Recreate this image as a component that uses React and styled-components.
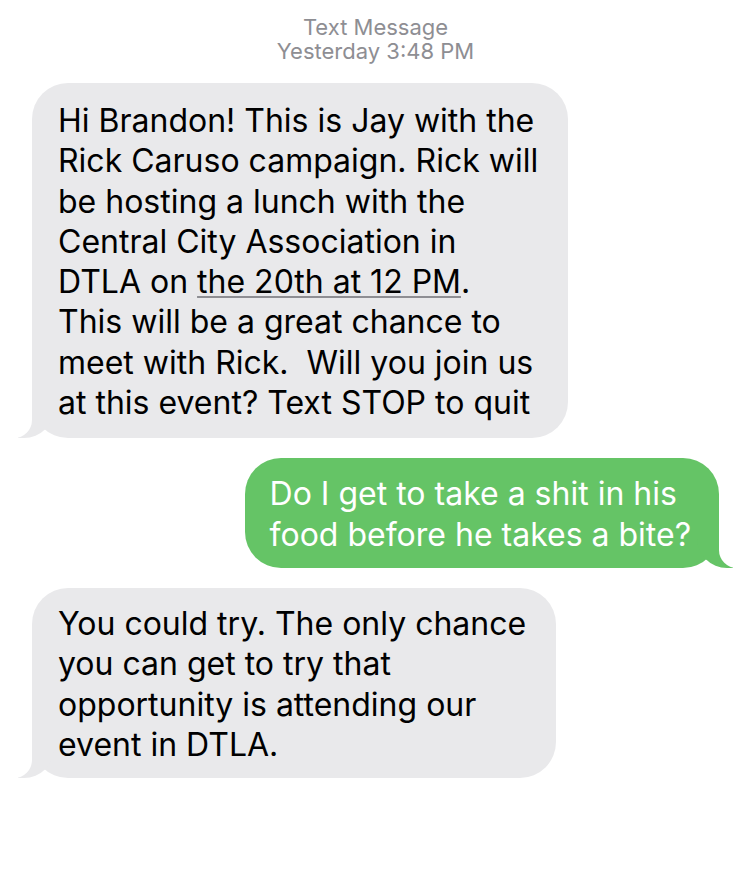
import React from 'react';
import styled, { createGlobalStyle, css } from 'styled-components';

const GlobalStyle = createGlobalStyle`
  html, body {
    margin: 0;
    padding: 0;
    background: #ffffff;
  }
  body {
    font-family: Inter, 'Noto Sans', 'Liberation Sans', sans-serif;
    -webkit-font-smoothing: antialiased;
  }
`;

const Thread = styled.div`
  width: 750px;
  height: 881px;
  box-sizing: border-box;
  padding: 15px 31px 0 32px;
  display: flex;
  flex-direction: column;
  gap: 20px;
`;

const Header = styled.div`
  text-align: center;
  color: #8e8e93;
  font-size: 22px;
  line-height: 24px;
  margin-bottom: 0;
`;

const bubbleColors = {
  in: { bg: '#e9e9eb', fg: '#000000' },
  out: { bg: '#65c466', fg: '#ffffff' },
};

const Bubble = styled.div`
  position: relative;
  width: fit-content;
  box-sizing: border-box;
  border-radius: 36px;
  font-size: 32px;
  line-height: 40.3px;
  letter-spacing: 0;
  background: ${p => bubbleColors[p.$side].bg};
  color: ${p => bubbleColors[p.$side].fg};
  padding: ${p => p.$pad || '16px 30px 13px 26px'};
  align-self: ${p => (p.$side === 'out' ? 'flex-end' : 'flex-start')};
  white-space: nowrap;

  &::before,
  &::after {
    content: '';
    position: absolute;
    bottom: 0;
    height: 40px;
  }

  ${p =>
    p.$side === 'in'
      ? css`
          &::before {
            left: -14px;
            width: 36px;
            background: ${bubbleColors.in.bg};
            border-bottom-right-radius: 30px;
          }
          &::after {
            left: -46px;
            width: 46px;
            background: #ffffff;
            border-bottom-right-radius: 18px;
          }
        `
      : css`
          &::before {
            right: -14px;
            width: 36px;
            background: ${bubbleColors.out.bg};
            border-bottom-left-radius: 30px;
          }
          &::after {
            right: -46px;
            width: 46px;
            background: #ffffff;
            border-bottom-left-radius: 18px;
          }
        `}
`;

const DateLink = styled.span`
  text-decoration: underline;
  text-decoration-color: #8e8e93;
  text-decoration-thickness: 2px;
  text-underline-offset: 3px;
`;

export default function App() {
  return (
    <>
      <GlobalStyle />
      <Thread>
        <Header>
          Text Message
          <br />
          Yesterday 3:48 PM
        </Header>

        <Bubble $side="in" $pad="18px 30px 15px 26px">
          Hi Brandon! This is Jay with the
          <br />
          Rick Caruso campaign. Rick will
          <br />
          be hosting a lunch with the
          <br />
          Central City Association in
          <br />
          DTLA on <DateLink>the 20th at 12 PM</DateLink>.
          <br />
          This will be a great chance to
          <br />
          meet with Rick.&nbsp; Will you join us
          <br />
          at this event? Text STOP to quit
        </Bubble>

        <Bubble $side="out" $pad="16px 28px 13px 25px">
          Do I get to take a shit in his
          <br />
          food before he takes a bite?
        </Bubble>

        <Bubble $side="in">
          You could try. The only chance
          <br />
          you can get to try that
          <br />
          opportunity is attending our
          <br />
          event in DTLA.
        </Bubble>
      </Thread>
    </>
  );
}
